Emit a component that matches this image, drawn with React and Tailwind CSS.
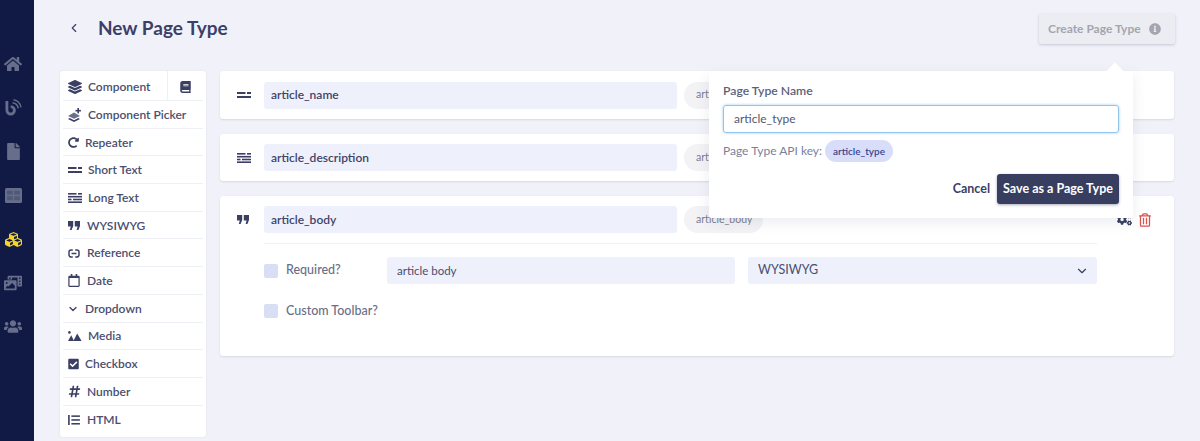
import React from 'react';
import { ChevronDown, ChevronLeft } from 'lucide-react';
import {
  FaBook,
  FaCheckSquare,
  FaCogs,
  FaCubes,
  FaFile,
  FaHashtag,
  FaHome,
  FaInfoCircle,
  FaLayerGroup,
  FaPhotoVideo,
  FaRedoAlt,
  FaRegCalendar,
  FaRegTrashAlt,
  FaUsers,
} from 'react-icons/fa';

const ShortTextIcon = ({ className }) => (
  <svg viewBox="0 0 14 6" className={className} fill="currentColor">
    <rect x="0" y="0" width="8.5" height="2" />
    <rect x="10" y="0" width="4" height="2" />
    <rect x="0" y="4" width="14" height="2" />
  </svg>
);

const LongTextIcon = ({ className }) => (
  <svg viewBox="0 0 14 10" className={className} fill="currentColor">
    <rect x="0" y="0" width="8.5" height="1.6" />
    <rect x="10" y="0" width="4" height="1.6" />
    <rect x="0" y="2.9" width="14" height="1.6" />
    <rect x="0" y="5.7" width="3.5" height="1.6" />
    <rect x="5" y="5.7" width="9" height="1.6" />
    <rect x="0" y="8.4" width="14" height="1.6" />
  </svg>
);

const QuoteIcon = ({ className }) => (
  <svg viewBox="0 0 12 9" className={className} fill="currentColor">
    <path d="M0 0h5.2v5L3.6 9H1.8l1-3.6H0z" />
    <path d="M6.8 0H12v5l-1.6 4H8.6l1-3.6H6.8z" />
  </svg>
);

const PickerIcon = ({ className }) => (
  <svg viewBox="0 0 14 14" className={className} fill="currentColor">
    <path d="M6 4.6 0 8l6 2.8L12 8z" opacity="0.75" />
    <path d="M0 11 6 14l6-3-1.7-.9L6 12.2 1.7 10.1z" />
    <rect x="9.4" y="0" width="1.6" height="5.4" />
    <rect x="7.5" y="1.9" width="5.4" height="1.6" />
  </svg>
);

const LinkIcon = ({ className }) => (
  <svg viewBox="0 0 14 11" className={className} fill="none" stroke="currentColor" strokeWidth="1.8">
    <path d="M5.5 1.2H3.5A2.6 2.6 0 0 0 .9 3.8v3.4a2.6 2.6 0 0 0 2.6 2.6h2" />
    <path d="M8.5 1.2h2a2.6 2.6 0 0 1 2.6 2.6v3.4a2.6 2.6 0 0 1-2.6 2.6h-2" />
    <path d="M4 5.5h6" />
  </svg>
);

const MediaIcon = ({ className }) => (
  <svg viewBox="0 0 14 10" className={className} fill="currentColor">
    <circle cx="1.4" cy="1.4" r="1.3" />
    <path d="M0 10 3.2 4.2 6 10z" />
    <path d="M5.4 10 9.2 2.6 13.6 10z" />
  </svg>
);

const HtmlIcon = ({ className }) => (
  <svg viewBox="0 0 13 11" className={className} fill="currentColor">
    <rect x="0" y="0" width="1.8" height="11" />
    <rect x="3.6" y="0.4" width="9.4" height="1.7" />
    <rect x="3.6" y="4.6" width="9.4" height="1.7" />
    <rect x="3.6" y="8.8" width="9.4" height="1.7" />
  </svg>
);

const BlogIcon = ({ className }) => (
  <svg viewBox="0 0 18 18" className={className} fill="none" stroke="currentColor">
    <path d="M2 2v10a4 4 0 1 0 4-4" strokeWidth="3" />
    <path d="M8 4a7 7 0 0 1 6 6" strokeWidth="1.6" />
    <path d="M9 0.8a10 10 0 0 1 8 8" strokeWidth="1.4" />
  </svg>
);

const TableIcon = ({ className }) => (
  <svg viewBox="0 0 17 15" className={className}>
    <rect width="17" height="15" rx="1.6" fill="currentColor" />
    <rect x="2" y="2.6" width="5.8" height="4" fill="#101a45" opacity="0.25" />
    <rect x="9.2" y="2.6" width="5.8" height="4" fill="#101a45" opacity="0.25" />
    <rect x="2" y="8.2" width="5.8" height="4" fill="#101a45" opacity="0.25" />
    <rect x="9.2" y="8.2" width="5.8" height="4" fill="#101a45" opacity="0.25" />
  </svg>
);

const navItems = [
  { icon: <FaHome className="w-[18px] h-[16px]" /> },
  { icon: <BlogIcon className="w-[17px] h-[17px]" /> },
  { icon: <FaFile className="w-[13px] h-[17px]" /> },
  { icon: <TableIcon className="w-[17px] h-[15px]" /> },
  { icon: <FaCubes className="w-[19px] h-[17px] text-[#f5d327]" /> },
  { icon: <FaPhotoVideo className="w-[18px] h-[16px]" /> },
  { icon: <FaUsers className="w-[18px] h-[15px]" /> },
];

const fieldTypes = [
  { label: 'Component Picker', box: 'w-[20px]', icon: <PickerIcon className="w-[14px] h-[14px]" /> },
  { label: 'Repeater', box: 'w-[17px]', icon: <FaRedoAlt className="w-[11px] h-[11px]" /> },
  { label: 'Short Text', box: 'w-[20px]', icon: <ShortTextIcon className="w-[14px] h-[6px]" /> },
  { label: 'Long Text', box: 'w-[20px]', icon: <LongTextIcon className="w-[14px] h-[10px]" /> },
  { label: 'WYSIWYG', box: 'w-[19px]', icon: <QuoteIcon className="w-[12px] h-[9px]" /> },
  { label: 'Reference', box: 'w-[19px]', icon: <LinkIcon className="w-[12px] h-[9px]" /> },
  { label: 'Date', box: 'w-[19px]', icon: <FaRegCalendar className="w-[12px] h-[13px]" /> },
  { label: 'Dropdown', box: 'w-[17px]', icon: <ChevronDown className="w-[12px] h-[12px] -ml-[1px]" strokeWidth={2.6} /> },
  { label: 'Media', box: 'w-[20px]', icon: <MediaIcon className="w-[14px] h-[10px]" /> },
  { label: 'Checkbox', box: 'w-[17px]', icon: <FaCheckSquare className="w-[11px] h-[12px]" /> },
  { label: 'Number', box: 'w-[19px]', icon: <FaHashtag className="w-[13px] h-[13px]" /> },
  { label: 'HTML', box: 'w-[19px]', icon: <HtmlIcon className="w-[12px] h-[10px]" /> },
];

const FieldRow = ({ icon, name }) => (
  <div className="flex items-center h-[27px]">
    <div className="w-[44px] pl-[17px] flex items-center text-[#3a3f63] shrink-0">{icon}</div>
    <div className="w-[413px] h-[27px] flex items-center px-[7px] bg-[#eef1fb] rounded-[3px] text-[12px] font-semibold text-[#3f4368]">
      {name}
    </div>
    <div className="ml-[7px] w-[79px] h-[27px] flex items-center pl-[12px] rounded-full bg-[#f3f3f6] text-[10.5px] text-[#7d7d8c]">
      {name}
    </div>
  </div>
);

export default function App() {
  return (
    <div className="flex h-[441px] w-[1200px] overflow-hidden bg-[#f1f2f9] font-['Lato',sans-serif] text-[#3a3f63]">
      <aside className="w-[34px] shrink-0 bg-[#101a45] flex flex-col items-center pt-[55px] pr-[8px] gap-[25.8px] text-[#676e8b]">
        {navItems.map((item, i) => (
          <div key={i} className="h-[18px] flex items-center justify-center">
            {item.icon}
          </div>
        ))}
      </aside>

      <main className="relative flex-1 pl-[26px] pr-[26px]">
        <header className="h-[71px] flex items-start">
          <div className="flex items-center h-[28px] mt-[14px] flex-1">
            <ChevronLeft className="ml-[7px] w-[14px] h-[14px] text-[#3a3f63]" strokeWidth={2} />
            <h1 className="ml-[17px] text-[19px] font-bold text-[#3c4068]">New Page Type</h1>
          </div>
          <button className="mt-[14px] -mr-[1px] w-[136px] h-[30px] flex items-center pl-[9px] rounded-[2px] bg-[#ecedf2] shadow-[0_1px_3px_rgba(60,65,100,0.25)] text-[12px] font-bold text-[#a3a5af]">
            Create Page Type
            <FaInfoCircle className="ml-[8px] w-[12px] h-[12px] text-[#a3a5af]" />
          </button>
        </header>

        <div className="flex items-start">
          <nav className="w-[146px] shrink-0 h-[366px] bg-white rounded-[3px] px-[3px] shadow-[0_0_2px_rgba(60,65,100,0.12)]">
            <div className="h-[30px] flex items-center border-b border-[#eff0f5]">
              <div className="flex-1 h-full flex items-center pl-[5px] pt-[2px] border-r border-[#eff0f5]">
                <div className="w-[20px] flex items-center">
                  <FaLayerGroup className="w-[14px] h-[14px]" />
                </div>
                <span className="text-[12px] font-semibold text-[#4a4e70]">Component</span>
              </div>
              <div className="w-[35px] pt-[2px] flex justify-center">
                <FaBook className="w-[11px] h-[12px]" />
              </div>
            </div>
            {fieldTypes.map((type, i) => (
              <div
                key={type.label}
                className={`h-[27.7px] flex items-center pl-[5px] pt-[1px] ${i < fieldTypes.length - 1 ? 'border-b border-[#eff0f5]' : ''}`}
              >
                <div className={`${type.box} flex items-center shrink-0`}>{type.icon}</div>
                <span className="text-[12px] font-semibold text-[#4a4e70]">{type.label}</span>
              </div>
            ))}
          </nav>

          <div className="ml-[14px] flex-1 flex flex-col gap-[15px]">
            <section className="h-[48px] flex items-center bg-white rounded-[3px] shadow-[0_1px_2px_rgba(60,65,100,0.15)]">
              <FieldRow name="article_name" icon={<ShortTextIcon className="w-[14px] h-[6px]" />} />
            </section>
            <section className="h-[47px] flex items-center bg-white rounded-[3px] shadow-[0_1px_2px_rgba(60,65,100,0.15)]">
              <FieldRow name="article_description" icon={<LongTextIcon className="w-[14px] h-[10px]" />} />
            </section>
            <section className="relative h-[160px] pt-[10px] bg-white rounded-[3px] shadow-[0_1px_2px_rgba(60,65,100,0.15)]">
              <div className="flex items-center justify-between pr-[23px]">
                <FieldRow name="article_body" icon={<QuoteIcon className="w-[12px] h-[9px]" />} />
                <div className="flex items-center gap-[7px]">
                  <FaCogs className="w-[15px] h-[13px] text-[#3a3f63]" />
                  <FaRegTrashAlt className="w-[12px] h-[14px] text-[#d9534f]" />
                </div>
              </div>
              <div className="ml-[44px] w-[833px] mt-[10px] pt-[13px] border-t border-[#f0f1f6]">
                <div className="flex items-center h-[27px]">
                  <div className="w-[14px] h-[14px] rounded-[2px] bg-[#d8def3]" />
                  <span className="ml-[8px] w-[101px] text-[12.5px] font-medium text-[#6a6e88]">Required?</span>
                  <div className="w-[348px] h-[27px] flex items-center pl-[10px] pt-[1px] rounded-[3px] bg-[#eef1fb] text-[11.5px] text-[#4a4e70]">
                    article body
                  </div>
                  <div className="ml-[13px] flex-1 h-[27px] flex items-center justify-between pl-[10px] pr-[8px] rounded-[3px] bg-[#eef1fb] text-[12.5px] text-[#4a4e70]">
                    WYSIWYG
                    <ChevronDown className="w-[14px] h-[14px] text-[#3a3f63]" strokeWidth={2} />
                  </div>
                </div>
                <div className="flex items-center h-[14px] mt-[20px]">
                  <div className="w-[14px] h-[14px] rounded-[2px] bg-[#d8def3]" />
                  <span className="ml-[8px] text-[12.5px] font-medium text-[#6a6e88]">Custom Toolbar?</span>
                </div>
              </div>
            </section>
          </div>
        </div>

        {/* popover hangs under the create button, over the cards */}
        <div className="absolute top-[71px] right-[67px] w-[424px] h-[147px] bg-white rounded-[2px] px-[14px] pt-[12px] shadow-[0_4px_14px_rgba(60,65,100,0.1)]">
          <div className="absolute -top-[6px] right-[12px] w-[12px] h-[12px] rotate-45 bg-white" />
          <label className="block text-[12.2px] font-semibold leading-[16px] text-[#5c607c]">Page Type Name</label>
          <div className="mt-[6px] h-[28px] flex items-center px-[10px] rounded-[3px] border border-[#93c5ea] shadow-[0_0_3px_rgba(120,185,235,0.7)] text-[12px] text-[#55586f]">
            article_type
          </div>
          <div className="mt-[7px] h-[22px] flex items-center text-[12px] text-[#7a7f9c]">
            Page Type API key:
            <span className="ml-[3px] h-[22px] flex items-center px-[8px] rounded-full bg-[#d8defa] text-[10px] font-semibold text-[#39458f]">
              article_type
            </span>
          </div>
          <div className="mt-[12px] flex items-center justify-end">
            <button className="text-[12.5px] font-bold text-[#3a3f63]">Cancel</button>
            <button className="ml-[7px] w-[122px] h-[30px] rounded-[3px] bg-[#383e60] text-[12.5px] font-bold text-white shadow-[0_1px_3px_rgba(40,45,80,0.4)]">
              Save as a Page Type
            </button>
          </div>
        </div>
      </main>
    </div>
  );
}
